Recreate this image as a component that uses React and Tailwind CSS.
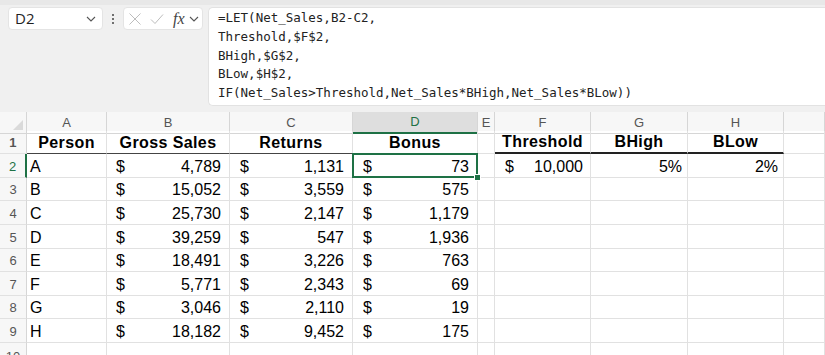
import React from "react";

const GRID =
  "grid grid-cols-[27px_80px_123px_123px_125px_17px_96px_97px_96px_1fr]";

const people = [
  ["A", "4,789", "1,131", "73"],
  ["B", "15,052", "3,559", "575"],
  ["C", "25,730", "2,147", "1,179"],
  ["D", "39,259", "547", "1,936"],
  ["E", "18,491", "3,226", "763"],
  ["F", "5,771", "2,343", "69"],
  ["G", "3,046", "2,110", "19"],
  ["H", "18,182", "9,452", "175"],
];

// row heights for rows 2..9
const heights = [
  "h-[24px]",
  "h-[23px]",
  "h-[24px]",
  "h-[24px]",
  "h-[23px]",
  "h-[24px]",
  "h-[23px]",
  "h-[24px]",
];

const cell =
  "border-r border-b border-[#e1e1e1] flex items-end pb-[1px] leading-[18px] min-w-0";

function Chevron({ className = "" }) {
  return (
    <svg width="10" height="6" viewBox="0 0 10 6" className={className}>
      <path d="M1 1l4 4 4-4" fill="none" stroke="#555" strokeWidth="1.1" />
    </svg>
  );
}

function Money({ value, pl = "pl-[9px]", pr = "pr-[8px]" }) {
  return (
    <div className={`${cell} justify-between ${pl} ${pr}`}>
      <span>$</span>
      <span>{value}</span>
    </div>
  );
}

function FormulaBar() {
  return (
    <div className="bg-[#f0f0f0] h-[112px]">
      <div className="h-[5px] bg-[#e8e8e8]" />
      <div className="flex items-start pl-[8px] pt-[2px]">
        {/* name box */}
        <div className="w-[95px] h-[23px] bg-white rounded-[4px] border border-[#e4e4e4] flex items-center justify-between pl-[6px] pr-[6px]">
          <span className="text-[15px] text-[#1f1f1f] font-['Open_Sans',sans-serif]">D2</span>
          <Chevron />
        </div>
        {/* vertical dots */}
        <div className="w-[20px] h-[23px] flex flex-col items-center justify-center gap-[2px]">
          <span className="w-[2px] h-[2px] bg-[#444] rounded-full" />
          <span className="w-[2px] h-[2px] bg-[#444] rounded-full" />
          <span className="w-[2px] h-[2px] bg-[#444] rounded-full" />
        </div>
        {/* cancel / enter / fx */}
        <div className="w-[80px] h-[23px] bg-white rounded-[4px] border border-[#e4e4e4] flex items-center pl-[4px]">
          <svg width="14" height="14" viewBox="0 0 14 14">
            <path d="M1.5 1.5l11 11M12.5 1.5l-11 11" stroke="#bdbdbd" strokeWidth="1" />
          </svg>
          <svg width="14" height="14" viewBox="0 0 14 14" className="ml-[8px]">
            <path d="M1 7.5l4 4 8-9" fill="none" stroke="#bdbdbd" strokeWidth="1" />
          </svg>
          <span className="ml-[9px] text-[16px] leading-none italic text-[#444] font-['Liberation_Serif',serif]">
            fx
          </span>
          <Chevron className="ml-[4px]" />
        </div>
        {/* formula box */}
        <div className="ml-[5px] flex-1 h-[99px] bg-white rounded-l-[5px] border border-r-0 border-[#e2e2e2] pl-[9px] pt-[1px]">
          <pre className="font-['DejaVu_Sans_Mono',monospace] text-[12.5px] leading-[18.8px] text-[#222]">
            {`=LET(Net_Sales,B2-C2,
Threshold,$F$2,
BHigh,$G$2,
BLow,$H$2,
IF(Net_Sales>Threshold,Net_Sales*BHigh,Net_Sales*BLow))`}
          </pre>
        </div>
      </div>
    </div>
  );
}

function ColumnHeaders() {
  const letters = ["A", "B", "C", "D", "E", "F", "G", "H", ""];
  return (
    <div className={`${GRID} h-[19px] bg-[#f7f7f7] text-[13px] text-[#555]`}>
      <div className="relative border-r border-b border-[#d6d6d6]">
        <svg width="10" height="10" viewBox="0 0 10 10" className="absolute right-[3px] bottom-[3px]">
          <path d="M10 0V10H0z" fill="#dadada" />
        </svg>
      </div>
      {letters.map((l, i) =>
        l === "D" ? (
          <div
            key={i}
            className="flex items-center justify-center bg-[#dedede] border-r border-[#d6d6d6] border-b-2 border-b-[#1e7145] text-[#1e7145]"
          >
            {l}
          </div>
        ) : (
          <div
            key={i}
            className="flex items-center justify-center border-r border-b border-[#d6d6d6]"
          >
            {l}
          </div>
        )
      )}
    </div>
  );
}

function RowNum({ n, active = false }) {
  return (
    <div
      className={`flex items-end justify-center pb-[2px] text-[13px] leading-[16px] bg-[#f7f7f7] border-b border-[#e1e1e1] ${
        active
          ? "text-[#1e7145] border-r-2 border-r-[#1e7145]"
          : "text-[#555] border-r border-r-[#d6d6d6]"
      }`}
    >
      {n}
    </div>
  );
}

export default function App() {
  return (
    <div className="w-[825px] h-[355px] overflow-hidden bg-white font-['Liberation_Sans',Arial,sans-serif] text-black">
      <FormulaBar />
      <ColumnHeaders />

      {/* row 1: headers */}
      <div className={`${GRID} h-[23px] text-[16px] font-bold tracking-[0.4px]`}>
        <RowNum n={1} />
        <div className="border-r border-b border-r-[#e1e1e1] border-b-[#444] flex items-end justify-center pb-[1px] leading-[18px]">Person</div>
        <div className="border-r border-b border-r-[#e1e1e1] border-b-[#444] flex items-end justify-center pb-[1px] leading-[18px]">Gross Sales</div>
        <div className="border-r border-b border-r-[#e1e1e1] border-b-[#444] flex items-end justify-center pb-[1px] leading-[18px]">Returns</div>
        <div className="border-r border-b border-r-[#e1e1e1] border-b-[#444] flex items-end justify-center pb-[1px] leading-[18px]">Bonus</div>
        <div className={cell} />
        <div className="border-r border-r-[#e1e1e1] border-b-2 border-b-[#222] flex items-end justify-center pb-[1px] leading-[18px]">Threshold</div>
        <div className="border-r border-r-[#e1e1e1] border-b-2 border-b-[#222] flex items-end justify-center pb-[1px] leading-[18px]">BHigh</div>
        <div className="border-r border-r-[#e1e1e1] border-b-2 border-b-[#222] flex items-end justify-center pb-[1px] leading-[18px]">BLow</div>
        <div className={cell} />
      </div>

      {/* data rows */}
      {people.map((p, i) => (
        <div key={p[0]} className={`${GRID} ${heights[i]} text-[16px]`}>
          <RowNum n={i + 2} active={i === 0} />
          <div className={`${cell} pl-[3px]`}>{p[0]}</div>
          <Money value={p[1]} />
          <Money value={p[2]} pl="pl-[10px]" />
          {i === 0 ? (
            <div className={`${cell} relative justify-between pl-[10px] pr-[8px]`}>
              <span>$</span>
              <span>{p[3]}</span>
              <div className="absolute -top-px -left-px -right-px -bottom-px border-2 border-[#1e7145] z-10" />
              <div className="absolute -right-[4px] -bottom-[4px] w-[7px] h-[7px] bg-[#1e7145] border border-white z-20" />
            </div>
          ) : (
            <Money value={p[3]} pl="pl-[10px]" />
          )}
          <div className={cell} />
          {i === 0 ? (
            <Money value="10,000" pl="pl-[10px]" pr="pr-[7px]" />
          ) : (
            <div className={cell} />
          )}
          <div className={`${cell} justify-end pr-[5px]`}>{i === 0 ? "5%" : ""}</div>
          <div className={`${cell} justify-end pr-[5px]`}>{i === 0 ? "2%" : ""}</div>
          <div className={cell} />
        </div>
      ))}

      {/* row 10, cut off */}
      <div className={`${GRID} h-[24px]`}>
        <div className="flex justify-center pt-[6px] text-[13px] leading-[16px] bg-[#f7f7f7] border-r border-[#d6d6d6] text-[#555]">
          10
        </div>
        {Array.from({ length: 9 }).map((_, k) => (
          <div key={k} className="border-r border-[#e1e1e1]" />
        ))}
      </div>
    </div>
  );
}
